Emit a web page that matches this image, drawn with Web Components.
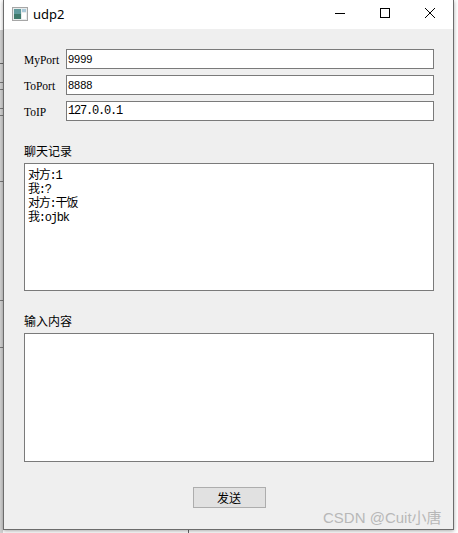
<!DOCTYPE html>
<html lang="zh">
<head>
<meta charset="utf-8">
<title>udp2</title>
<style>
  html, body { margin: 0; height: 533px; overflow: hidden; }
  body {
    padding: 0 0 0 3px;
    box-sizing: border-box;
    background-color: #fff;
    background-image:
      linear-gradient(#666, #666), linear-gradient(#666, #666), linear-gradient(#777, #777),
      linear-gradient(#777, #777), linear-gradient(#777, #777), linear-gradient(#777, #777),
      linear-gradient(#777, #777), linear-gradient(#777, #777), linear-gradient(#777, #777),
      linear-gradient(#d2d2d2, #d2d2d2);
    background-size: 1px 3px, 3px 1px, 3px 1px, 3px 1px, 3px 1px, 3px 1px, 3px 1px, 3px 1px, 3px 1px, 3px 503px;
    background-position: 188px 530px, 0 63px, 0 82px, 0 89px, 0 108px, 0 115px, 0 181px, 0 300px, 0 347px, 0 30px;
    background-repeat: no-repeat;
  }
</style>
</head>
<body>
<app-window title="udp2">
  <form-row label="MyPort" value="9999" sans></form-row>
  <form-row label="ToPort" value="8888" sans></form-row>
  <form-row label="ToIP" value="127.0.0.1"></form-row>
  <text-panel label="聊天记录" style="margin-top:16px">
    <div>对方:1</div>
    <div>我:?</div>
    <div>对方:干饭</div>
    <div>我:ojbk</div>
  </text-panel>
  <text-panel label="输入内容" style="margin-top:16px;--panel-height:129px"></text-panel>
  <push-button>发送</push-button>
</app-window>
<watermark-tag>CSDN @Cuit小唐</watermark-tag>
<script>
const MONO = '"Liberation Mono", "Noto Sans CJK SC", monospace';

class TitleBar extends HTMLElement {
  constructor() {
    super();
    this.attachShadow({ mode: "open" });
    this.shadowRoot.innerHTML = `
<style>
  :host {
    display: flex;
    align-items: center;
    height: 29px;
    background: #fff;
    padding-left: 8px;
    color: #000;
  }
  .icon { width: 16px; height: 14px; margin-bottom: 2px; }
  .title {
    margin-left: 5px;
    margin-bottom: 2px;
    font: 13px "Noto Sans", sans-serif;
  }
  .buttons { margin-left: auto; display: flex; align-items: center; }
  .buttons svg { display: block; width: 46px; height: 29px; }
</style>
<svg class="icon" viewBox="0 0 16 14">
  <rect x=".5" y=".5" width="15" height="13" fill="#e8ecec" stroke="#a6a6a6"/>
  <rect x="2" y="2" width="7" height="10" fill="#5f9a9c"/>
  <rect x="2" y="7" width="7" height="5" fill="#3f7a6c"/>
  <rect x="10" y="2" width="4" height="3" fill="#a9c9d9"/>
  <rect x="10" y="6" width="4" height="6" fill="#fff"/>
</svg>
<span class="title"></span>
<div class="buttons">
  <svg viewBox="0 0 46 29"><path d="M20 13.5h10" stroke="#000" fill="none"/></svg>
  <svg viewBox="0 0 46 29"><rect x="19.5" y="8.5" width="9" height="9" stroke="#000" fill="none"/></svg>
  <svg viewBox="0 0 46 29"><path d="M18 8l10 10M28 8l-10 10" stroke="#000" fill="none"/></svg>
</div>`;
  }

  connectedCallback() {
    this.shadowRoot.querySelector(".title").textContent = this.getAttribute("title");
  }
}

class AppWindow extends HTMLElement {
  constructor() {
    super();
    this.attachShadow({ mode: "open" });
    this.shadowRoot.innerHTML = `
<style>
  :host {
    display: block;
    box-sizing: border-box;
    width: 451px;
    height: 530px;
    background: #efefef;
    border: 1px solid #6c6c6c;
    border-top: 0;
    box-shadow: 0 1px 4px rgba(0, 0, 0, .35);
  }
  .content {
    display: flex;
    flex-direction: column;
    gap: 6px;
    padding: 20px 19px 0 20px;
  }
</style>
<title-bar></title-bar>
<div class="content"><slot></slot></div>`;
  }

  connectedCallback() {
    const bar = this.shadowRoot.querySelector("title-bar");
    bar.setAttribute("title", this.getAttribute("title"));
    bar.connectedCallback();
  }
}

class FormRow extends HTMLElement {
  constructor() {
    super();
    this.attachShadow({ mode: "open" });
    this.shadowRoot.innerHTML = `
<style>
  :host {
    display: flex;
    align-items: center;
    height: 20px;
    color: #000;
  }
  .label {
    width: 42px;
    flex: none;
    padding-top: 1px;
    font: 11.5px "Liberation Serif", serif;
  }
  .field {
    flex: 1;
    box-sizing: border-box;
    height: 20px;
    padding-left: 1px;
    background: #fff;
    border: 1px solid #7a7a7a;
    font: 12px/19px ${MONO};
    letter-spacing: -1.2px;
  }
  :host([sans]) .field {
    font: 11px/18px "Liberation Sans", sans-serif;
    letter-spacing: 0;
  }
</style>
<span class="label"></span>
<div class="field"></div>`;
  }

  connectedCallback() {
    this.shadowRoot.querySelector(".label").textContent = this.getAttribute("label");
    this.shadowRoot.querySelector(".field").textContent = this.getAttribute("value");
  }
}

class TextPanel extends HTMLElement {
  constructor() {
    super();
    this.attachShadow({ mode: "open" });
    this.shadowRoot.innerHTML = `
<style>
  :host {
    display: block;
    font: 12px "Noto Sans CJK SC", sans-serif;
    color: #000;
  }
  .label { height: 16px; line-height: 16px; margin-bottom: 4px; }
  .box {
    box-sizing: border-box;
    height: var(--panel-height, 128px);
    padding: 5px 3px;
    background: #fff;
    border: 1px solid #7a7a7a;
    font: 12px/14px ${MONO};
    letter-spacing: -1.2px;
  }
</style>
<div class="label"></div>
<div class="box"><slot></slot></div>`;
  }

  connectedCallback() {
    this.shadowRoot.querySelector(".label").textContent = this.getAttribute("label");
  }
}

class PushButton extends HTMLElement {
  constructor() {
    super();
    this.attachShadow({ mode: "open" });
    this.shadowRoot.innerHTML = `
<style>
  :host {
    display: flex;
    align-items: center;
    justify-content: center;
    box-sizing: border-box;
    align-self: center;
    width: 73px;
    height: 21px;
    margin-top: 19px;
    background: #e1e1e1;
    border: 1px solid #adadad;
    font: 12px "Noto Sans CJK SC", sans-serif;
    color: #000;
  }
</style>
<slot></slot>`;
  }
}

// sits over the window, like the image watermark it copies
class WatermarkTag extends HTMLElement {
  constructor() {
    super();
    this.attachShadow({ mode: "open" });
    this.shadowRoot.innerHTML = `
<style>
  :host {
    position: absolute;
    left: 323px;
    top: 506px;
    white-space: nowrap;
    font: 15px "Liberation Sans", "Noto Sans CJK SC", sans-serif;
    color: #b8b8b8;
  }
</style>
<slot></slot>`;
  }
}

customElements.define("title-bar", TitleBar);
customElements.define("watermark-tag", WatermarkTag);
customElements.define("form-row", FormRow);
customElements.define("text-panel", TextPanel);
customElements.define("push-button", PushButton);
customElements.define("app-window", AppWindow);
</script>
</body>
</html>
